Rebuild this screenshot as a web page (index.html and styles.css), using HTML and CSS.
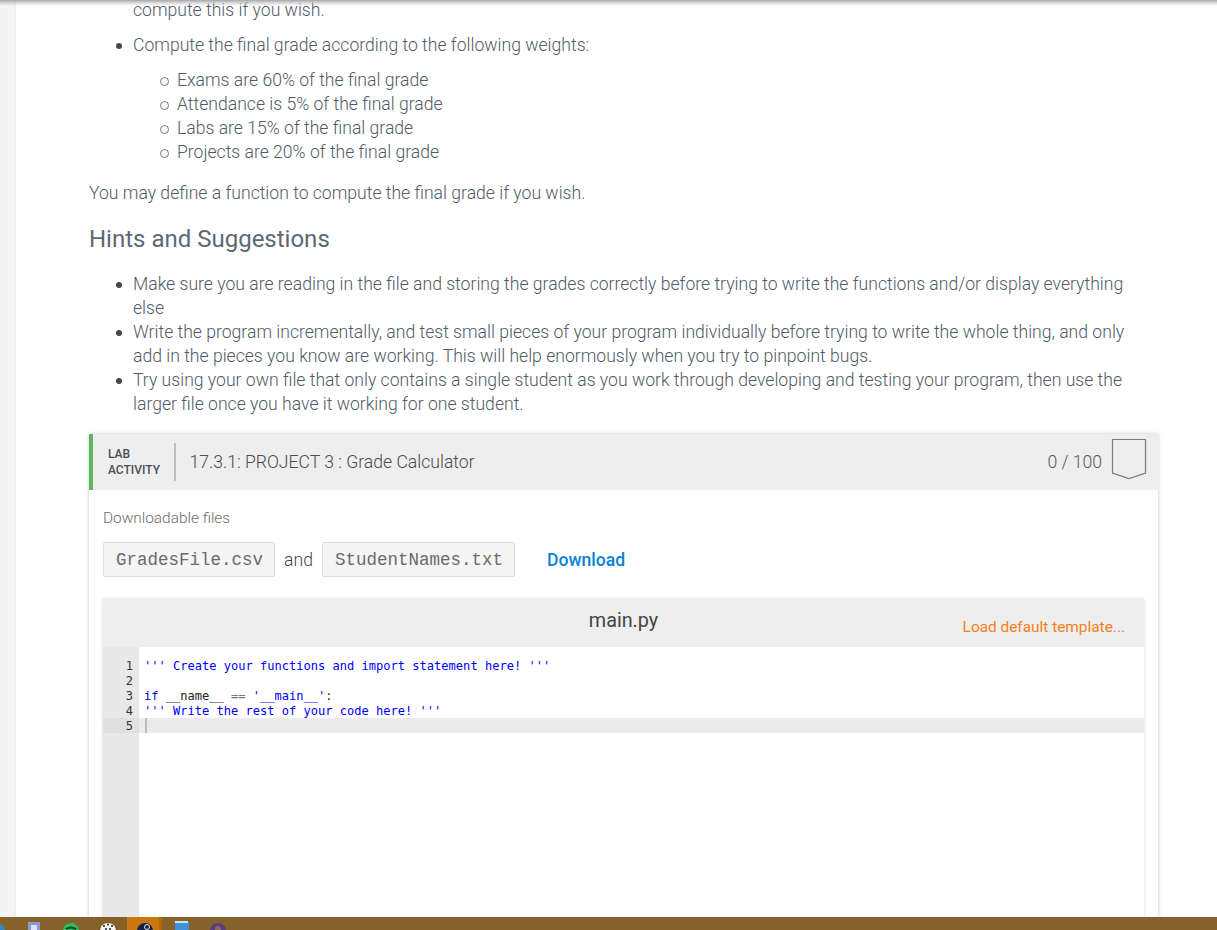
FILE: index.html
```html
<!DOCTYPE html>
<html lang="en">
<head>
<meta charset="utf-8">
<title>PROJECT 3 : Grade Calculator</title>
<link rel="stylesheet" href="styles.css">
</head>
<body>
<div class="top-shadow"></div>
<div class="viewport">
  <div class="gutter"></div>
  <main class="page">
    <ul class="list first-list">
      <li class="continued">compute this if you wish.</li>
      <li class="weights">Compute the final grade according to the following weights:
        <ul class="sublist">
          <li>Exams are 60% of the final grade</li>
          <li>Attendance is 5% of the final grade</li>
          <li>Labs are 15% of the final grade</li>
          <li>Projects are 20% of the final grade</li>
        </ul>
      </li>
    </ul>
    <p class="para">You may define a function to compute the final grade if you wish.</p>
    <h3 class="heading">Hints and Suggestions</h3>
    <ul class="list hints">
      <li>Make sure you are reading in the file and storing the grades correctly before trying to write the functions and/or display everything else</li>
      <li>Write the program incrementally, and test small pieces of your program individually before trying to write the whole thing, and only add in the pieces you know are working. This will help enormously when you try to pinpoint bugs.</li>
      <li>Try using your own file that only contains a single student as you work through developing and testing your program, then use the larger file once you have it working for one student.</li>
    </ul>
    <section class="lab">
      <header class="lab-head">
        <div class="lab-tag">LAB<br>ACTIVITY</div>
        <div class="lab-title">17.3.1: PROJECT 3 : Grade Calculator</div>
        <div class="lab-score">0 / 100</div>
        <svg class="badge" width="36" height="42" viewBox="0 0 36 42"><path d="M1.500 1.500H34.500V35L18 40.500L1.500 35Z" fill="none" stroke="#7a7a7a" stroke-width="1.200"/></svg>
      </header>
      <div class="lab-body">
        <div class="dl-label">Downloadable files</div>
        <div class="dl-row">
          <span class="file">GradesFile.csv</span>
          <span class="and">and</span>
          <span class="file">StudentNames.txt</span>
          <a class="download">Download</a>
        </div>
        <div class="editor">
          <div class="editor-head">
            <div class="filename">main.py</div>
            <a class="template">Load default template...</a>
          </div>
          <div class="code">
            <div class="line"><span class="num">1</span><span class="src str">''' Create your functions and import statement here! '''</span></div>
            <div class="line"><span class="num">2</span><span class="src"></span></div>
            <div class="line"><span class="num">3</span><span class="src"><span class="kw">if</span> __name__ <span class="op">==</span> <span class="str">'__main__'</span>:</span></div>
            <div class="line"><span class="num">4</span><span class="src str">''' Write the rest of your code here! '''</span></div>
            <div class="line active"><span class="num">5</span><span class="src"><span class="cursor"></span></span></div>
          </div>
        </div>
      </div>
    </section>
  </main>
</div>
<footer class="taskbar">
  <svg class="tb-icons" width="300" height="13" viewBox="0 0 300 13">
    <rect x="127" y="0" width="32" height="13" fill="#c9780f"/>
    <rect x="159" y="0" width="3" height="13" fill="#b5690f"/>
    <path d="M0 13V7L3 8L5 13Z" fill="#2f88c8"/>
    <rect x="28" y="5" width="12" height="8" fill="#8b9bd0"/>
    <rect x="31" y="8" width="6" height="5" fill="#dfe4f4"/>
    <circle cx="71" cy="14" r="8" fill="#22c15e"/>
    <path d="M66 12Q71 9 76 12" stroke="#1a3a22" stroke-width="2" fill="none"/>
    <circle cx="108" cy="14" r="8" fill="#f2f2f2"/>
    <circle cx="104" cy="9" r="1" fill="#222"/><circle cx="108" cy="7.500" r="1" fill="#222"/><circle cx="112" cy="9" r="1" fill="#222"/><circle cx="106" cy="12" r="1" fill="#222"/><circle cx="110" cy="12" r="1" fill="#222"/>
    <circle cx="145" cy="14" r="8" fill="#15234a"/>
    <circle cx="147" cy="10" r="2.500" fill="none" stroke="#e8e8e8"/>
    <path d="M175 5H189V13H175Z" fill="#3f92d8"/>
    <path d="M175 4H188V6H175Z" fill="#cfe3f3"/>
    <circle cx="218" cy="14" r="8" fill="#5b3a86"/>
    <circle cx="218" cy="12" r="3" fill="#8a6c58"/>
  </svg>
</footer>
</body>
</html>
```
FILE: styles.css
```css
* { box-sizing: border-box; }
html, body { margin: 0; height: 100%; }
body {
  height: 930px;
  overflow: hidden;
  display: flex;
  flex-direction: column;
  position: relative;
  font-family: Roboto, "Liberation Sans", sans-serif;
  font-weight: 300;
  font-size: 17.600px;
  line-height: 24px;
  color: #4f5b66;
  background: #fff;
}
.top-shadow {
  position: absolute;
  top: 0; left: 0; right: 0;
  height: 6px;
  background: linear-gradient(#a8a8a8, rgba(195,195,195,0.6) 50%, rgba(255,255,255,0));
  z-index: 2;
}
.viewport { flex: 1; min-height: 0; display: flex; overflow: hidden; }
.gutter { width: 16px; flex: none; background: #f4f4f4; box-shadow: inset -1px 0 1px #ececec; }
.page { flex: 1; min-width: 0; padding: 0 59px 0 73px; margin-top: -2px; }
.list { margin: 0; padding: 0 0 0 44px; list-style: none; }
.list li { position: relative; }
.list li::before {
  content: "";
  position: absolute;
  left: -17px;
  top: 10px;
  width: 6px;
  height: 6px;
  border-radius: 50%;
  background: #3f4a54;
}
.list .continued::before { display: none; }
.weights { margin-top: 11px; }
.sublist { margin: 11px 0 0; padding: 0 0 0 44px; list-style: none; }
.list .sublist li::before {
  left: -17px;
  top: 9px;
  width: 7px;
  height: 7px;
  background: none;
  border: 1px solid #6b7681;
}
.para { margin: 17px 0 0; }
.heading { margin: 18px 0 0; font-size: 24px; line-height: 32px; font-weight: 400; color: #5b6974; }
.hints { margin-top: 17px; padding-right: 25px; }
.lab {
  margin-top: 18px;
  box-shadow: 0 0 4px rgba(0,0,0,0.22);
  background: #fff;
}
.lab-head {
  height: 56px;
  display: flex;
  align-items: center;
  background: #eeeeee;
  border-left: 4px solid #5cb85c;
  padding-right: 11px;
}
.lab-tag {
  width: 83px;
  height: 38px;
  padding: 3px 0 0 15px;
  border-right: 2px solid #bdbdbd;
  font-size: 12px;
  line-height: 16px;
  font-weight: 500;
  color: #4a4f54;
  flex: none;
}
.lab-title { margin-left: 13.500px; flex: 1; color: #4a4a4a; }
.lab-score { margin-right: 9px; }
.badge { flex: none; align-self: flex-start; margin-top: 4px; }
.lab-body { padding: 17px 14px 0 14px; height: 600px; }
.dl-label { font-size: 15.400px; line-height: 22px; color: #6d6d6d; }
.dl-row { display: flex; align-items: center; margin-top: 13px; height: 35px; }
.file {
  height: 35px;
  padding: 0 11px 0 12px;
  display: flex;
  align-items: center;
  background: #f5f5f5;
  border: 1px solid #dcdcdc;
  border-radius: 2px;
  font-family: "Liberation Mono", monospace;
  font-size: 17.500px;
  font-weight: 400;
  color: #6a6a6a;
}
.and { margin: 0 9px 0 9px; color: #444; }
.download { margin-left: 32px; font-weight: 500; color: #0683d4; }
.editor { margin-top: 22px; box-shadow: 0 0 3px rgba(0,0,0,0.18); }
.editor-head {
  height: 48px;
  background: #eeeeee;
  display: flex;
  position: relative;
  justify-content: flex-end;
  align-items: flex-end;
  padding: 0 19px 8px 0;
}
.filename {
  position: absolute;
  left: 0; right: 0; top: 10px;
  text-align: center;
  font-size: 19.800px;
  font-weight: 400;
  color: #444;
}
.template { font-size: 15.400px; line-height: 24px; font-weight: 400; color: #f77f1b; }
.code {
  padding-top: 11px;
  background: linear-gradient(to right, #e8e8e8 36px, #fff 36px);
  font-family: "DejaVu Sans Mono", monospace;
  font-size: 12.050px;
  font-weight: 400;
  line-height: 17px;
  color: #222;
  height: 400px;
}
.line { display: flex; height: 15px; }
.line.active { background: #ebebeb; }
.line.active .num { background: #e0e0e0; width: 36px; height: 15px; padding-right: 6px; }
.line.active .src { margin-left: 6px; }
.num { width: 30px; text-align: right; color: #333; flex: none; }
.src { margin-left: 11px; white-space: pre; }
.str { color: #0000ff; }
.kw { color: #0000d0; }
.op { color: #777; }
.cursor { display: block; width: 2px; height: 15px; background: #bbb; }
.taskbar { height: 13px; flex: none; background: #84622a; overflow: hidden; position: relative; z-index: 3; }
.tb-icons { display: block; }
```
